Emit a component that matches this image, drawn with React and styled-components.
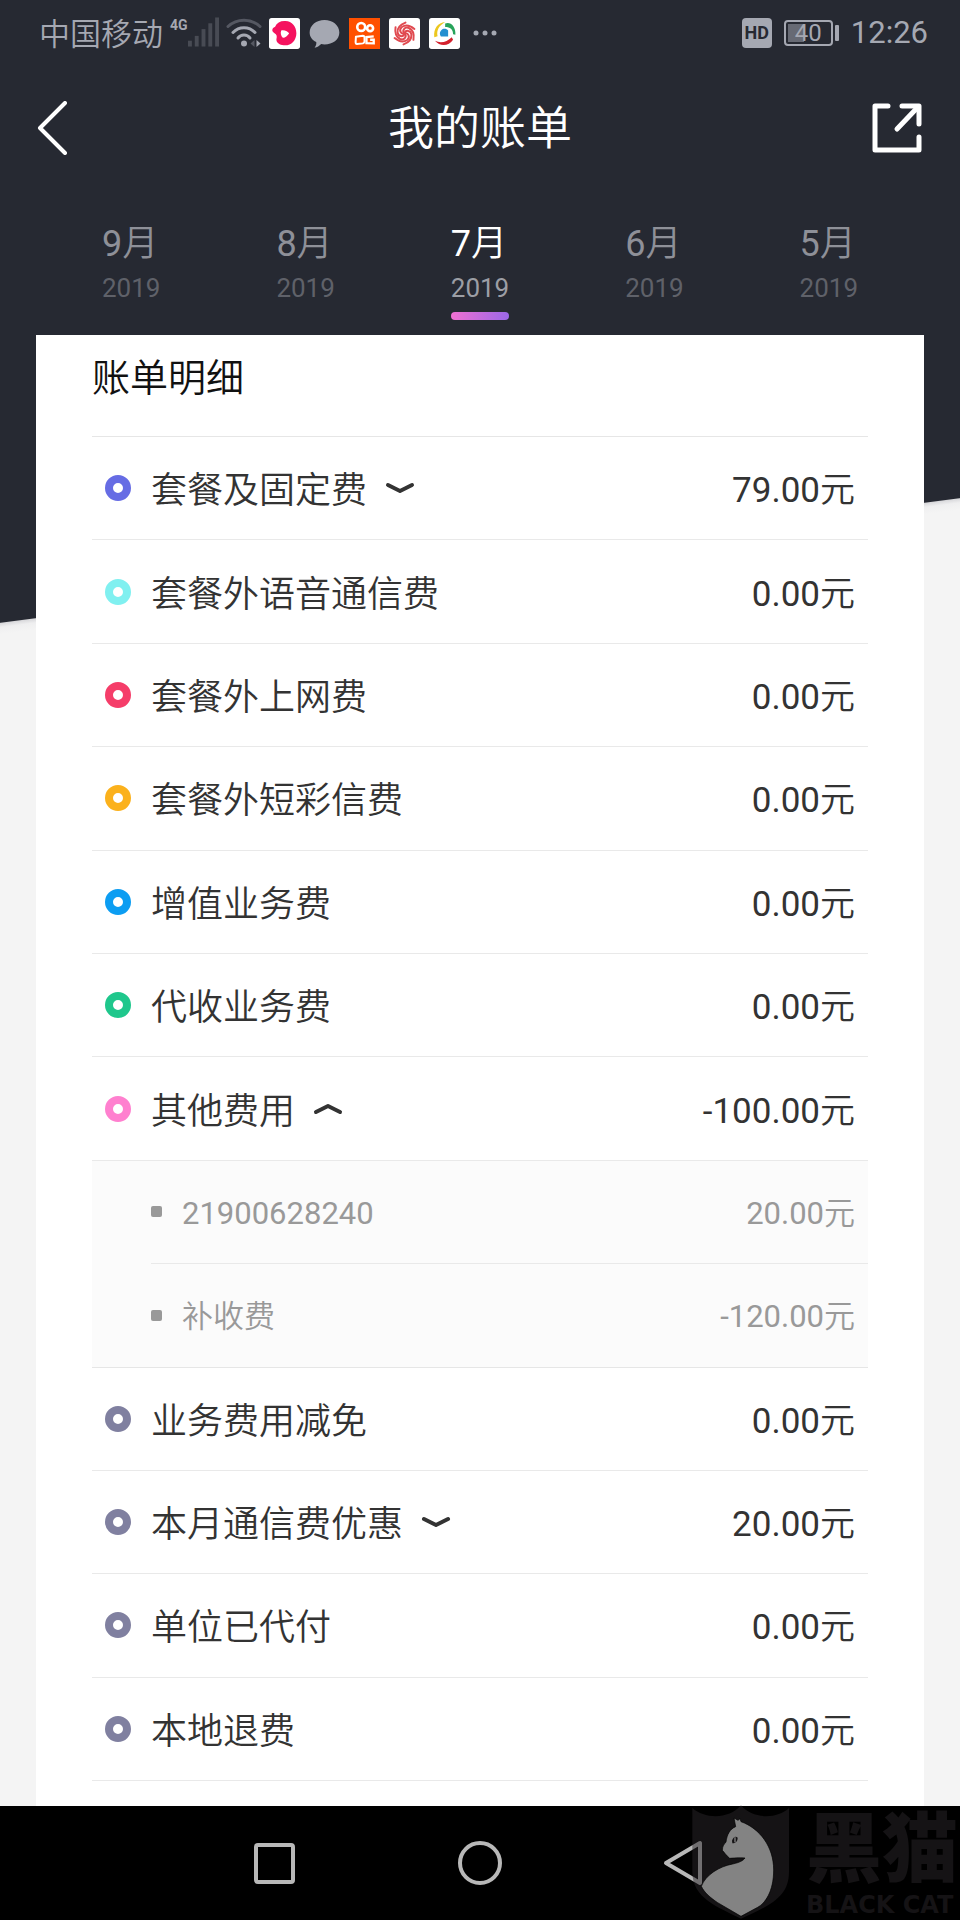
// src/App.jsx
import React, { useState } from 'react';
import styled, { createGlobalStyle } from 'styled-components';

const GlobalStyle = createGlobalStyle`
  * {
    box-sizing: border-box;
  }
  body {
    margin: 0;
    background: #f4f4f4;
    font-family: Roboto, 'Noto Sans CJK SC', sans-serif;
    font-weight: 400;
  }
  button {
    padding: 0;
    border: 0;
    background: none;
    color: inherit;
    font: inherit;
    cursor: pointer;
  }
  ul {
    margin: 0;
    padding: 0;
    list-style: none;
  }
  svg {
    display: block;
    flex: none;
  }
`;

/* dark header that ends in a slanted edge behind the card */
const Page = styled.div`
  display: flex;
  flex-direction: column;
  min-height: 100vh;
  background: linear-gradient(
      172.6deg,
      #262932 50%,
      #d9d9dc calc(50% + 1px),
      #efeff0 calc(50% + 5px),
      #f4f4f4 calc(50% + 12px)
    )
    top / 100% 1120px no-repeat #f4f4f4;
`;

const StatusBar = styled.div`
  display: flex;
  align-items: center;
  justify-content: space-between;
  height: 66px;
  padding: 0 32px 0 39px;
  color: #a5a8b2;
  font-size: 31px;
  line-height: 36px;
`;

const StatusGroup = styled.div`
  display: flex;
  align-items: center;
  gap: ${(props) => props.$gap}px;
`;

const Carrier = styled.span`
  padding-top: 4px;
  font-weight: 350;
`;

const Signal = styled.span`
  display: flex;
  align-items: flex-start;
  height: 32px;
`;

const Network = styled.span`
  font-size: 14px;
  font-weight: 700;
  line-height: 16px;
`;

const HdBadge = styled.span`
  width: 30px;
  height: 30px;
  border-radius: 4px;
  background: #a5a8b2;
  color: #262932;
  font-size: 18px;
  font-weight: 700;
  line-height: 30px;
  text-align: center;
`;

const Battery = styled.span`
  display: flex;
  align-items: center;
  gap: 2px;

  &::after {
    content: '';
    width: 4px;
    height: 16px;
    border-radius: 1px;
    background: #a5a8b2;
  }
`;

const BatteryBody = styled.span`
  width: 49px;
  height: 26px;
  border: 2px solid #a5a8b2;
  border-radius: 4px;
  background: linear-gradient(to right, #676a74 40%, transparent 40%) content-box;
  padding: 2px;
  font-size: 24px;
  line-height: 19px;
  text-align: center;
`;

const TitleBar = styled.header`
  display: flex;
  align-items: center;
  justify-content: space-between;
  height: 122px;
  padding: 2px 37px 0;
  color: #fff;
`;

const IconButton = styled.button`
  display: flex;
  justify-content: ${(props) => props.$align};
  width: 54px;
`;

const Title = styled.h1`
  margin: 0;
  font-size: 46px;
  font-weight: 350;
  line-height: 60px;
`;

const Months = styled.nav`
  display: flex;
  height: 147px;
  padding: 32px 44px 15px;
`;

const MonthTab = styled.button`
  display: flex;
  flex: 1;
  justify-content: center;
  color: ${(props) => (props.$active ? '#fff' : '#8e9098')};
`;

const MonthInner = styled.span`
  display: flex;
  flex-direction: column;
  text-align: left;

  &::after {
    content: '';
    height: 8px;
    margin-top: 8px;
    border-radius: 4px;
    background: ${(props) => (props.$active ? 'linear-gradient(to right, #f070d2, #9b68e8)' : 'none')};
  }
`;

const MonthName = styled.span`
  font-size: 36px;
  line-height: 48px;
`;

const Year = styled.span`
  margin-top: 4px;
  color: ${(props) => (props.$active ? '#9c9ea5' : '#5f6169')};
  font-size: 26px;
  line-height: 32px;
`;

const Card = styled.main`
  display: flex;
  flex: 1;
  flex-direction: column;
  margin: 0 36px;
  padding: 0 56px 25px;
  background: #fff;
`;

const CardTitle = styled.h2`
  margin: 0;
  padding: 15px 0 30px;
  border-bottom: 1px solid #e6e6e6;
  color: #111;
  font-size: 38px;
  font-weight: 350;
  line-height: 56px;
`;

const List = styled.ul`
  display: flex;
  flex: 1;
  flex-direction: column;
`;

const Row = styled.li`
  display: flex;
  flex: 1 0 103px;
  align-items: center;
  padding: 0 13px 0 13px;
  border-bottom: 1px solid #e9e9e9;
  color: #333;
  font-size: 35px;
  line-height: 44px;
`;

const SubRow = styled(Row)`
  padding-left: 0;
  border-bottom: 0;
  background: #fbfbfb;
  color: #999;
  font-size: 31px;
`;

const SubBody = styled.div`
  display: flex;
  flex: 1;
  align-self: stretch;
  align-items: center;
  margin: 0 -13px 0 59px;
  padding-right: 13px;
  border-bottom: 1px solid #e9e9e9;
`;

const LastSubRow = styled(SubRow)`
  border-bottom: 1px solid #e6e6e6;

  ${SubBody} {
    border-bottom: 0;
  }
`;

const Dot = styled.span`
  width: 26px;
  height: 26px;
  margin-right: 20px;
  border: 8px solid ${(props) => props.$color};
  border-radius: 50%;
`;

const Bullet = styled.span`
  width: 11px;
  height: 11px;
  margin-right: 20px;
  border-radius: 2px;
  background: #999;
`;

const Label = styled.span`
  padding-top: 6px;
  font-size: 36px;
  font-weight: 350;
`;

const SubLabel = styled.span`
  padding-top: 4px;
`;

const Toggle = styled.button`
  display: flex;
  align-items: center;
  gap: 18px;
`;

const Amount = styled.span`
  margin-left: auto;
  padding-top: 6px;
`;

const SubAmount = styled(Amount)`
  padding-top: 4px;
`;

const Cjk = styled.span`
  font-weight: 350;
`;

const SystemNav = styled.footer`
  position: sticky;
  bottom: 0;
  display: flex;
  align-items: center;
  justify-content: center;
  gap: 157px;
  height: 114px;
  background: #000;
`;

/* translucent mark lying over the corner of the system bar */
const Watermark = styled.div`
  position: absolute;
  right: 0;
  bottom: 0;
  display: flex;
  gap: 15px;
  align-items: flex-end;
  padding-right: 2px;
  pointer-events: none;
`;

const WatermarkText = styled.div`
  display: flex;
  flex-direction: column;
  gap: 12px;
  padding-bottom: 2px;
  color: #151315;
  white-space: nowrap;
`;

const WatermarkName = styled.span`
  font-family: 'Noto Sans CJK SC', sans-serif;
  font-size: 76px;
  font-weight: 900;
  line-height: 74px;
`;

const WatermarkLatin = styled.span`
  font-family: 'DejaVu Sans', sans-serif;
  font-size: 24px;
  font-weight: 700;
  line-height: 26px;
`;

const SignalIcon = () => (
  <svg width="31" height="30" viewBox="0 0 32 30" fill="#484b54">
    <rect x="0" y="24" width="4" height="6" />
    <rect x="7" y="19" width="4" height="11" />
    <rect x="14" y="12" width="4" height="18" />
    <rect x="21" y="6" width="4" height="24" />
    <rect x="28" y="0" width="4" height="30" />
  </svg>
);

const WifiIcon = () => (
  <svg width="36" height="30" viewBox="0 0 36 30" fill="none" strokeWidth="3" strokeLinecap="round">
    <path d="M2 8.5C11 0 25 0 34 8.5" stroke="#555862" />
    <path d="M7 14.5C13 8 23 8 29 14.5" stroke="#a5a8b2" />
    <path d="M12 20C15 16 21 16 24 20" stroke="#a5a8b2" />
    <circle cx="18" cy="25.500" r="3" fill="#a5a8b2" />
    <path d="M28.500 22v7l-4-3.500z" fill="#555862" />
    <path d="M30.500 22v7l4-3.500z" fill="#a5a8b2" />
  </svg>
);

const PetalIcon = () => (
  <svg width="31" height="31" viewBox="0 0 94 94">
    <rect width="94" height="94" rx="8" fill="#fff" />
    <path
      fillRule="evenodd"
      fill="#f5125f"
      d="M12 42C8 36 11 29 18 27C24 14 35 8 50 9C70 10 83 26 83 46C83 67 68 83 49 83C36 83 26 78 23 70C21 63 25 59 23 53C21 48 15 47 12 42ZM37 38C34 45 36 55 42 60C48 61 56 54 61 47C58 41 46 35 37 38Z"
    />
  </svg>
);

const ChatIcon = () => (
  <svg width="31" height="31" viewBox="0 0 94 94">
    <path fill="#a5a8b2" d="M47 6C72 6 92 22 92 44C92 66 72 80 47 80C43 80 40 80 37 79C31 85 25 89 17 90C21 85 23 80 22 73C9 67 2 56 2 44C2 22 22 6 47 6Z" />
  </svg>
);

const CameraIcon = () => (
  <svg width="31" height="31" viewBox="0 0 94 94" fill="none" stroke="#fff">
    <rect width="94" height="94" fill="#ff5000" stroke="none" />
    <circle cx="37" cy="27" r="12" strokeWidth="8" />
    <circle cx="64" cy="31" r="9" strokeWidth="8" />
    <path d="M21 57l21-3c3 0 5 2 5 5v12c0 3-2 5-5 6l-18 2c-3 0-4-3-4-6z" strokeWidth="6" />
    <path d="M75 56l-22 2v18l22 1v-11h-11" strokeWidth="7" />
  </svg>
);

const SwirlIcon = () => (
  <svg width="31" height="31" viewBox="0 0 94 94" fill="none" stroke="#e04a50" strokeLinecap="round">
    <rect width="94" height="94" rx="8" fill="#fff" stroke="none" />
    {[0, 60, 120, 180, 240, 300].map((angle) => (
      <path
        key={angle}
        d="M47 47C50 35 66 37 68 50C69 62 60 74 44 80"
        strokeWidth="6"
        transform={`rotate(${angle} 47 47)`}
      />
    ))}
  </svg>
);

const RingIcon = () => (
  <svg width="31" height="31" viewBox="0 0 94 94">
    <rect width="94" height="94" rx="8" fill="#fff" />
    <path fill="#ecc71e" d="M49 12C27 14 13 31 16 58L26 55C22 38 30 23 49 12Z" />
    <path fill="#27a35a" d="M49 17C64 10 82 25 80 51L73 49C73 34 64 27 49 27Z" />
    <path fill="#d3202c" d="M18 69C36 78 55 72 69 58L73 66C60 86 33 87 18 69Z" />
    <path fill="#238fd0" d="M36 39C40 31 53 31 58 38V56H36C32 50 32 44 36 39Z" />
  </svg>
);

const MoreIcon = () => (
  <svg width="28" height="31" viewBox="0 0 28 31" fill="#a5a8b2">
    <circle cx="7" cy="15" r="2.500" />
    <circle cx="16" cy="15" r="2.500" />
    <circle cx="25" cy="15" r="2.500" />
  </svg>
);

const BackIcon = () => (
  <svg width="32" height="54" viewBox="0 0 32 54" fill="none" stroke="#fff" strokeWidth="4" strokeLinecap="round" strokeLinejoin="round">
    <path d="M28 2L3 27L28 52" />
  </svg>
);

const ShareIcon = () => (
  <svg width="52" height="52" viewBox="0 0 52 52" fill="none" stroke="#fff" strokeWidth="5" strokeLinecap="round" strokeLinejoin="round">
    <path d="M17 4H4V48H48V35" />
    <path d="M31 4H48V22" />
    <path d="M47 5L26 27" />
  </svg>
);

const ChevronIcon = ({ up }) => (
  <svg width="30" height="12" viewBox="0 0 30 12" fill="none" stroke="#333" strokeWidth="4" strokeLinecap="round" strokeLinejoin="round">
    <path d={up ? 'M3 9L15 3L27 9' : 'M3 3L15 9L27 3'} />
  </svg>
);

const CatIcon = () => (
  <svg width="100" height="115" viewBox="90 45 300 345">
    <path
      fill="#2a262a"
      fillOpacity="0.5"
      d="M94 54C132 88 205 88 240 46C275 88 348 88 384 54V245C384 320 330 345 240 386C170 350 94 325 94 245Z"
    />
    <path
      fill="#838383"
      stroke="#000"
      strokeWidth="2"
      d="M219 84L231 91L237 86L240 95C296 115 338 170 338 240C338 305 312 340 290 352L240 379L170 338C148 323 130 308 121 289C134 254 176 229 215 222C237 217 246 212 252 204C234 203 218 204 206 205C196 197 189 186 184 181C184 168 190 162 195 156C198 133 207 117 224 110Z"
    />
    <path fill="#151315" d="M213 152C217 140 224 138 230 143C230 154 223 160 214 160Z" />
    <path stroke="#838383" strokeWidth="4" d="M222 142v15" />
  </svg>
);

const months = [9, 8, 7, 6, 5];

const bill = [
  { name: '套餐及固定费', amount: '79.00', color: '#666ce4', items: [] },
  { name: '套餐外语音通信费', amount: '0.00', color: '#80f0f0' },
  { name: '套餐外上网费', amount: '0.00', color: '#f53d69' },
  { name: '套餐外短彩信费', amount: '0.00', color: '#fbb11c' },
  { name: '增值业务费', amount: '0.00', color: '#0c9df2' },
  { name: '代收业务费', amount: '0.00', color: '#1fc78c' },
  {
    name: '其他费用',
    amount: '-100.00',
    color: '#ff80cf',
    items: [
      { name: '21900628240', amount: '20.00' },
      { name: '补收费', amount: '-120.00' },
    ],
  },
  { name: '业务费用减免', amount: '0.00', color: '#8080a0' },
  { name: '本月通信费优惠', amount: '20.00', color: '#8080a0', items: [] },
  { name: '单位已代付', amount: '0.00', color: '#8080a0' },
  { name: '本地退费', amount: '0.00', color: '#8080a0' },
];

const BillRow = ({ entry, open, onToggle }) => (
  <>
    <Row>
      <Dot $color={entry.color} />
      {entry.items ? (
        <Toggle type="button" aria-expanded={open} onClick={onToggle}>
          <Label>{entry.name}</Label>
          <ChevronIcon up={open} />
        </Toggle>
      ) : (
        <Label>{entry.name}</Label>
      )}
      <Amount>
        {entry.amount}
        <Cjk>元</Cjk>
      </Amount>
    </Row>
    {open &&
      entry.items.map((item, index) => {
        const Item = index === entry.items.length - 1 ? LastSubRow : SubRow;
        return (
          <Item key={item.name}>
            <SubBody>
              <Bullet />
              <SubLabel>{/^\d+$/.test(item.name) ? item.name : <Cjk>{item.name}</Cjk>}</SubLabel>
              <SubAmount>
                {item.amount}
                <Cjk>元</Cjk>
              </SubAmount>
            </SubBody>
          </Item>
        );
      })}
  </>
);

const App = () => {
  const [month, setMonth] = useState(7);
  const [opened, setOpened] = useState('其他费用');

  return (
    <Page>
      <GlobalStyle />
      <StatusBar>
        <StatusGroup $gap={7}>
          <Carrier>中国移动</Carrier>
          <Signal>
            <Network>4G</Network>
            <SignalIcon />
          </Signal>
          <WifiIcon />
          <StatusGroup $gap={9}>
            <PetalIcon />
            <ChatIcon />
            <CameraIcon />
            <SwirlIcon />
            <RingIcon />
            <MoreIcon />
          </StatusGroup>
        </StatusGroup>
        <StatusGroup $gap={12}>
          <HdBadge>HD</HdBadge>
          <Battery>
            <BatteryBody>40</BatteryBody>
          </Battery>
          <span>12:26</span>
        </StatusGroup>
      </StatusBar>

      <TitleBar>
        <IconButton type="button" aria-label="返回" $align="flex-start">
          <BackIcon />
        </IconButton>
        <Title>我的账单</Title>
        <IconButton type="button" aria-label="分享" $align="flex-end">
          <ShareIcon />
        </IconButton>
      </TitleBar>

      <Months>
        {months.map((value) => (
          <MonthTab key={value} type="button" $active={value === month} onClick={() => setMonth(value)}>
            <MonthInner $active={value === month}>
              <MonthName>
                {value}
                <Cjk>月</Cjk>
              </MonthName>
              <Year $active={value === month}>2019</Year>
            </MonthInner>
          </MonthTab>
        ))}
      </Months>

      <Card>
        <CardTitle>账单明细</CardTitle>
        <List>
          {bill.map((entry) => (
            <BillRow
              key={entry.name}
              entry={entry}
              open={opened === entry.name}
              onToggle={() => setOpened(opened === entry.name ? null : entry.name)}
            />
          ))}
        </List>
      </Card>

      <SystemNav>
        <button type="button" aria-label="最近任务">
          <svg width="48" height="48" viewBox="0 0 48 48" fill="none" stroke="#b8b8b8" strokeWidth="4">
            <rect x="5" y="6" width="37" height="37" rx="2" />
          </svg>
        </button>
        <button type="button" aria-label="主屏幕">
          <svg width="48" height="48" viewBox="0 0 48 48" fill="none" stroke="#b8b8b8" strokeWidth="4">
            <circle cx="24" cy="24" r="20" />
          </svg>
        </button>
        <button type="button" aria-label="返回上一页">
          <svg width="48" height="48" viewBox="0 0 48 48" fill="none" stroke="#b8b8b8" strokeWidth="4" strokeLinejoin="round">
            <path d="M5 24L39 4V44Z" />
          </svg>
        </button>
        <Watermark>
          <CatIcon />
          <WatermarkText>
            <WatermarkName>黑猫</WatermarkName>
            <WatermarkLatin>BLACK CAT</WatermarkLatin>
          </WatermarkText>
        </Watermark>
      </SystemNav>
    </Page>
  );
};

export default App;
